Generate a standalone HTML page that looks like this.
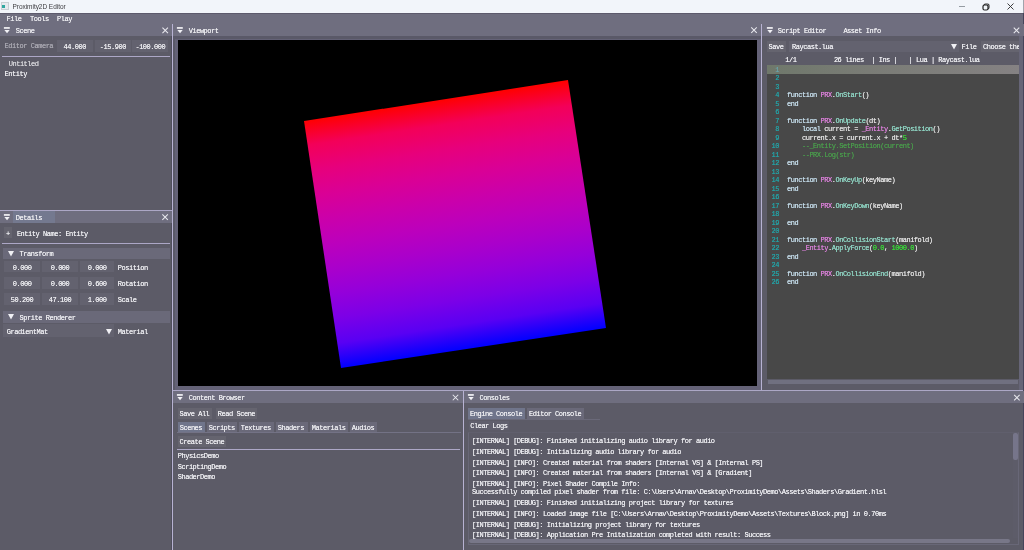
<!DOCTYPE html>
<html><head><meta charset="utf-8">
<style>
html,body{margin:0;padding:0;width:1024px;height:550px;overflow:hidden;background:#5c5b67;}
*{box-sizing:border-box;}
div{position:absolute;}
.t{transform:scaleY(1.1);transform-origin:0 3.5px;text-shadow:0 0 0.3px currentColor;white-space:pre;font:7px 'Liberation Mono',monospace;letter-spacing:-0.47px;line-height:8px;height:8px;color:#ececf0;}
.dim{color:#a8a7b0;}
</style></head><body><div id="root" style="left:0;top:0;width:1024px;height:550px;will-change:transform;">
<div style="left:0px;top:0px;width:1024.00px;height:13.00px;background:#f2f5fa;"></div>
<div style="left:1px;top:2px;width:8.00px;height:8.00px;background:#e6eaee;border:1px solid #c8d0d4;"></div>
<div style="left:2px;top:4.5px;width:3.00px;height:3.50px;background:#2fa7a0;"></div>
<div class="t" style="left:12.5px;top:2.6px;font:6.5px 'Liberation Sans',sans-serif;letter-spacing:-0.04px;color:#3c3c40;text-shadow:none;">Proximity2D Editor</div>
<div style="left:958.8px;top:5.5px;width:5.90px;height:1.30px;background:#959ba2;"></div>
<svg style="position:absolute;left:982px;top:2.5px" width="8" height="8"><rect x="2" y="1" width="5" height="5" rx="1.5" fill="none" stroke="#333" stroke-width="1.1"/><rect x="1" y="2" width="5" height="5" rx="1.5" fill="#f0f4f8" stroke="#222" stroke-width="1.2"/></svg>
<svg style="position:absolute;left:1006.5px;top:3px" width="7" height="7"><path d="M0.5 0.5L6.5 6.5M6.5 0.5L0.5 6.5" stroke="#2a2a2a" stroke-width="0.9"/></svg>
<div style="left:0px;top:13px;width:1024.00px;height:11.00px;background:#6f6e7f;"></div>
<div style="left:0px;top:13px;width:1024.00px;height:1.00px;background:#5d5a6c;"></div>
<div class="t" style="left:6.6px;top:15.25px;">File</div>
<div class="t" style="left:30px;top:15.25px;">Tools</div>
<div class="t" style="left:57px;top:15.25px;">Play</div>
<div style="left:171px;top:36px;width:1.00px;height:514.00px;background:#4f4e5c;"></div>
<div style="left:172px;top:24px;width:1.00px;height:526.00px;background:#b7b2d2;"></div>
<div style="left:761px;top:24px;width:1.00px;height:367.00px;background:#b7b2d2;"></div>
<div style="left:463px;top:391px;width:1.00px;height:159.00px;background:#b7b2d2;"></div>
<div style="left:0px;top:210px;width:172.00px;height:1.00px;background:#aca7c6;"></div>
<div style="left:173px;top:390px;width:851.00px;height:1.00px;background:#aca7c6;"></div>
<div style="left:1023px;top:13px;width:1.00px;height:537.00px;background:#45445a;"></div>
<div style="left:1023px;top:0px;width:1.00px;height:13.00px;background:#a0a4ac;"></div>
<div style="left:0px;top:24px;width:172.00px;height:12.00px;background:#6f6e7f;"></div>
<svg style="position:absolute;left:3px;top:26px" width="9" height="9"><rect x="0.9" y="1.1" width="5.9" height="1.7" fill="#f2f2f6"/><path d="M1.4 3.9L6.7 3.9L4.05 7.2Z" fill="#f2f2f6"/></svg>
<div class="t" style="left:15.8px;top:27.40px;">Scene</div>
<svg style="position:absolute;left:161px;top:26px" width="8" height="8"><path d="M1.45 1.65L6.95 7.15M6.95 1.65L1.45 7.15" stroke="#e8e8ee" stroke-width="1.05"/></svg>
<div class="t dim" style="left:4.6px;top:41.50px;">Editor Camera</div>
<div style="left:56.5px;top:40px;width:36.40px;height:12.20px;background:#63626f;"></div>
<div class="t" style="left:56.5px;top:42.80px;width:36.40px;text-align:center;">44.000</div>
<div style="left:94.7px;top:40px;width:36.30px;height:12.20px;background:#63626f;"></div>
<div class="t" style="left:94.7px;top:42.80px;width:36.30px;text-align:center;">-15.900</div>
<div style="left:132.3px;top:40px;width:36.10px;height:12.20px;background:#63626f;"></div>
<div class="t" style="left:132.3px;top:42.80px;width:36.10px;text-align:center;">-100.000</div>
<div style="left:2px;top:56px;width:168.00px;height:1.00px;background:#aca7c6;"></div>
<div class="t" style="left:8.7px;top:59.80px;color:#d6d6da;">Untitled</div>
<div class="t" style="left:4.6px;top:69.90px;">Entity</div>
<div style="left:0px;top:211px;width:172.00px;height:12.00px;background:#6f6e7f;"></div>
<div style="left:13px;top:211px;width:41.50px;height:12.00px;background:#74798f;"></div>
<svg style="position:absolute;left:3px;top:213px" width="9" height="9"><rect x="0.9" y="1.1" width="5.9" height="1.7" fill="#f2f2f6"/><path d="M1.4 3.9L6.7 3.9L4.05 7.2Z" fill="#f2f2f6"/></svg>
<div class="t" style="left:15.8px;top:213.70px;">Details</div>
<svg style="position:absolute;left:161px;top:213px" width="8" height="8"><path d="M1.35 1.35L6.85 6.85M6.85 1.35L1.35 6.85" stroke="#e8e8ee" stroke-width="1.05"/></svg>
<div style="left:4px;top:227px;width:8.00px;height:11.00px;background:#65646f;"></div>
<div class="t" style="left:6px;top:229.80px;">+</div>
<div class="t" style="left:16.9px;top:230.10px;">Entity Name: Entity</div>
<div style="left:2px;top:243px;width:168.00px;height:1.00px;background:#aca7c6;"></div>
<div style="left:2.7px;top:248px;width:167.30px;height:11.00px;background:#6a6979;"></div>
<svg style="position:absolute;left:7.5px;top:250.5px" width="7" height="6"><path d="M0 0L6 0L3 5.5Z" fill="#f0f0f4"/></svg>
<div class="t" style="left:19.6px;top:250.10px;">Transform</div>
<div style="left:3.8px;top:260.7px;width:36.50px;height:11.80px;background:#63626f;"></div>
<div class="t" style="left:3.8px;top:263.80px;width:36.50px;text-align:center;">0.000</div>
<div style="left:42px;top:260.7px;width:36.00px;height:11.80px;background:#63626f;"></div>
<div class="t" style="left:42px;top:263.80px;width:36.00px;text-align:center;">0.000</div>
<div style="left:79.6px;top:260.7px;width:34.90px;height:11.80px;background:#63626f;"></div>
<div class="t" style="left:79.6px;top:263.80px;width:34.90px;text-align:center;">0.000</div>
<div class="t" style="left:117.8px;top:263.80px;">Position</div>
<div style="left:3.8px;top:277px;width:36.50px;height:11.80px;background:#63626f;"></div>
<div class="t" style="left:3.8px;top:280.10px;width:36.50px;text-align:center;">0.000</div>
<div style="left:42px;top:277px;width:36.00px;height:11.80px;background:#63626f;"></div>
<div class="t" style="left:42px;top:280.10px;width:36.00px;text-align:center;">0.000</div>
<div style="left:79.6px;top:277px;width:34.90px;height:11.80px;background:#63626f;"></div>
<div class="t" style="left:79.6px;top:280.10px;width:34.90px;text-align:center;">0.600</div>
<div class="t" style="left:117.8px;top:280.10px;">Rotation</div>
<div style="left:3.8px;top:293px;width:36.50px;height:11.80px;background:#63626f;"></div>
<div class="t" style="left:3.8px;top:296.10px;width:36.50px;text-align:center;">50.200</div>
<div style="left:42px;top:293px;width:36.00px;height:11.80px;background:#63626f;"></div>
<div class="t" style="left:42px;top:296.10px;width:36.00px;text-align:center;">47.100</div>
<div style="left:79.6px;top:293px;width:34.90px;height:11.80px;background:#63626f;"></div>
<div class="t" style="left:79.6px;top:296.10px;width:34.90px;text-align:center;">1.000</div>
<div class="t" style="left:117.8px;top:296.10px;">Scale</div>
<div style="left:2.7px;top:311px;width:167.30px;height:11.50px;background:#6a6979;"></div>
<svg style="position:absolute;left:7.5px;top:314px" width="7" height="6"><path d="M0 0L6 0L3 5.5Z" fill="#f0f0f4"/></svg>
<div class="t" style="left:19.6px;top:313.70px;">Sprite Renderer</div>
<div style="left:3.4px;top:324.3px;width:110.60px;height:12.70px;background:#63626f;"></div>
<div class="t" style="left:6.7px;top:327.80px;">GradientMat</div>
<svg style="position:absolute;left:106px;top:328.5px" width="7" height="6"><path d="M0 0L6 0L3 5.5Z" fill="#f0f0f4"/></svg>
<div class="t" style="left:117.8px;top:327.50px;">Material</div>
<div style="left:173px;top:24px;width:588.00px;height:12.00px;background:#6f6e7f;"></div>
<svg style="position:absolute;left:176px;top:26px" width="9" height="9"><rect x="0.9" y="1.1" width="5.9" height="1.7" fill="#f2f2f6"/><path d="M1.4 3.9L6.7 3.9L4.05 7.2Z" fill="#f2f2f6"/></svg>
<div class="t" style="left:188.7px;top:27.40px;">Viewport</div>
<svg style="position:absolute;left:750px;top:26px" width="8" height="8"><path d="M1.25 1.35L6.75 6.85M6.75 1.35L1.25 6.85" stroke="#e8e8ee" stroke-width="1.05"/></svg>
<div style="left:173px;top:36px;width:588.00px;height:354.00px;background:#646277;"></div>
<div style="left:173px;top:36px;width:588.00px;height:3.00px;background:#5a5968;"></div>
<div style="left:173px;top:36px;width:2.00px;height:354.00px;background:#5a5968;"></div>
<div style="left:177.6px;top:40.2px;width:579.30px;height:345.70px;background:#000;"></div>
<svg style="position:absolute;left:0;top:0" width="1024" height="550">
<defs><linearGradient id="g" gradientUnits="userSpaceOnUse" x1="436" y1="100.5" x2="473.5" y2="348">
<stop offset="0.0" stop-color="rgb(255,0,0)"/><stop offset="0.1" stop-color="rgb(243,0,89)"/><stop offset="0.2" stop-color="rgb(231,0,124)"/><stop offset="0.3" stop-color="rgb(218,0,149)"/><stop offset="0.4" stop-color="rgb(203,0,170)"/><stop offset="0.5" stop-color="rgb(188,0,188)"/><stop offset="0.6" stop-color="rgb(170,0,203)"/><stop offset="0.7" stop-color="rgb(149,0,218)"/><stop offset="0.8" stop-color="rgb(124,0,231)"/><stop offset="0.9" stop-color="rgb(89,0,243)"/><stop offset="1.0" stop-color="rgb(0,0,255)"/></linearGradient></defs>
<polygon points="304,121 568,80 606,328 341,368" fill="url(#g)"/>
</svg>
<div style="left:762px;top:24px;width:262.00px;height:12.00px;background:#6f6e7f;"></div>
<svg style="position:absolute;left:766px;top:26px" width="9" height="9"><rect x="0.9" y="1.1" width="5.9" height="1.7" fill="#f2f2f6"/><path d="M1.4 3.9L6.7 3.9L4.05 7.2Z" fill="#f2f2f6"/></svg>
<div class="t" style="left:777.8px;top:27.40px;">Script Editor</div>
<div class="t" style="left:843.4px;top:27.40px;">Asset Info</div>
<svg style="position:absolute;left:1012px;top:26px" width="8" height="8"><path d="M1.75 1.70L7.25 7.20M7.25 1.70L1.75 7.20" stroke="#e8e8ee" stroke-width="1.05"/></svg>
<div style="left:767px;top:40.5px;width:19.00px;height:11.50px;background:#65646f;"></div>
<div class="t" style="left:768.6px;top:42.80px;">Save</div>
<div style="left:789.4px;top:40.5px;width:169.40px;height:11.50px;background:#63626f;"></div>
<div class="t" style="left:792px;top:42.80px;">Raycast.lua</div>
<svg style="position:absolute;left:951px;top:43.5px" width="7" height="6"><path d="M0 0L6 0L3 5.5Z" fill="#f0f0f4"/></svg>
<div class="t" style="left:961.6px;top:42.80px;">File</div>
<div style="left:981px;top:40.5px;width:40.00px;height:11.50px;background:#65646f;"></div>
<div class="t" style="left:983px;top:42.80px;width:38px;overflow:hidden;">Choose the</div>
<div class="t" style="left:785.3px;top:55.50px;">1/1</div>
<div class="t" style="left:833.9px;top:55.50px;">26 lines  | Ins |   | Lua | Raycast.lua</div>
<div style="left:1019px;top:36px;width:4.00px;height:354.00px;background:#666577;"></div>
<div style="left:766.5px;top:64.6px;width:252.00px;height:314.70px;background:#484848;"></div>
<div style="left:766.5px;top:64.8px;width:252.00px;height:8.90px;background:#737570;background:linear-gradient(90deg,#6f786b,#7a7c76 40%,#858283);"></div>
<div style="left:767.7px;top:380px;width:250.00px;height:4.40px;background:#707080;"></div>
<div class="t" style="left:758.7px;top:66.00px;width:20.30px;text-align:right;color:#6aa0a8;">1</div>
<div class="t" style="left:758.7px;top:74.49px;width:20.30px;text-align:right;color:#24a0a4;">2</div>
<div class="t" style="left:758.7px;top:82.98px;width:20.30px;text-align:right;color:#24a0a4;">3</div>
<div class="t" style="left:758.7px;top:91.47px;width:20.30px;text-align:right;color:#24a0a4;">4</div>
<div class="t" style="left:787px;top:91.47px;text-shadow:0 0 0.15px currentColor;"><span style="color:#c4dcea">function </span><span style="color:#d77fd6">PRX</span><span style="color:#e0e0e0">.</span><span style="color:#8fd6c4">OnStart</span><span style="color:#e0e0e0">()</span></div>
<div class="t" style="left:758.7px;top:99.96px;width:20.30px;text-align:right;color:#24a0a4;">5</div>
<div class="t" style="left:787px;top:99.96px;text-shadow:0 0 0.15px currentColor;"><span style="color:#c4dcea">end</span></div>
<div class="t" style="left:758.7px;top:108.45px;width:20.30px;text-align:right;color:#24a0a4;">6</div>
<div class="t" style="left:758.7px;top:116.94px;width:20.30px;text-align:right;color:#24a0a4;">7</div>
<div class="t" style="left:787px;top:116.94px;text-shadow:0 0 0.15px currentColor;"><span style="color:#c4dcea">function </span><span style="color:#d77fd6">PRX</span><span style="color:#e0e0e0">.</span><span style="color:#8fd6c4">OnUpdate</span><span style="color:#e0e0e0">(dt)</span></div>
<div class="t" style="left:758.7px;top:125.43px;width:20.30px;text-align:right;color:#24a0a4;">8</div>
<div class="t" style="left:787px;top:125.43px;text-shadow:0 0 0.15px currentColor;"><span style="color:#c4dcea">    local </span><span style="color:#e0e0e0">current = </span><span style="color:#d77fd6">_Entity</span><span style="color:#e0e0e0">.</span><span style="color:#8fd6c4">GetPosition</span><span style="color:#e0e0e0">()</span></div>
<div class="t" style="left:758.7px;top:133.92px;width:20.30px;text-align:right;color:#24a0a4;">9</div>
<div class="t" style="left:787px;top:133.92px;text-shadow:0 0 0.15px currentColor;"><span style="color:#e0e0e0">    current.x = current.x + dt*</span><span style="color:#38d838">5</span></div>
<div class="t" style="left:758.7px;top:142.41px;width:20.30px;text-align:right;color:#24a0a4;">10</div>
<div class="t" style="left:787px;top:142.41px;text-shadow:0 0 0.15px currentColor;"><span style="color:#4a9a4c">    --_Entity.SetPosition(current)</span></div>
<div class="t" style="left:758.7px;top:150.90px;width:20.30px;text-align:right;color:#24a0a4;">11</div>
<div class="t" style="left:787px;top:150.90px;text-shadow:0 0 0.15px currentColor;"><span style="color:#4a9a4c">    --PRX.Log(str)</span></div>
<div class="t" style="left:758.7px;top:159.39px;width:20.30px;text-align:right;color:#24a0a4;">12</div>
<div class="t" style="left:787px;top:159.39px;text-shadow:0 0 0.15px currentColor;"><span style="color:#c4dcea">end</span></div>
<div class="t" style="left:758.7px;top:167.88px;width:20.30px;text-align:right;color:#24a0a4;">13</div>
<div class="t" style="left:758.7px;top:176.37px;width:20.30px;text-align:right;color:#24a0a4;">14</div>
<div class="t" style="left:787px;top:176.37px;text-shadow:0 0 0.15px currentColor;"><span style="color:#c4dcea">function </span><span style="color:#d77fd6">PRX</span><span style="color:#e0e0e0">.</span><span style="color:#8fd6c4">OnKeyUp</span><span style="color:#e0e0e0">(keyName)</span></div>
<div class="t" style="left:758.7px;top:184.86px;width:20.30px;text-align:right;color:#24a0a4;">15</div>
<div class="t" style="left:787px;top:184.86px;text-shadow:0 0 0.15px currentColor;"><span style="color:#c4dcea">end</span></div>
<div class="t" style="left:758.7px;top:193.35px;width:20.30px;text-align:right;color:#24a0a4;">16</div>
<div class="t" style="left:758.7px;top:201.84px;width:20.30px;text-align:right;color:#24a0a4;">17</div>
<div class="t" style="left:787px;top:201.84px;text-shadow:0 0 0.15px currentColor;"><span style="color:#c4dcea">function </span><span style="color:#d77fd6">PRX</span><span style="color:#e0e0e0">.</span><span style="color:#8fd6c4">OnKeyDown</span><span style="color:#e0e0e0">(keyName)</span></div>
<div class="t" style="left:758.7px;top:210.33px;width:20.30px;text-align:right;color:#24a0a4;">18</div>
<div class="t" style="left:758.7px;top:218.82px;width:20.30px;text-align:right;color:#24a0a4;">19</div>
<div class="t" style="left:787px;top:218.82px;text-shadow:0 0 0.15px currentColor;"><span style="color:#c4dcea">end</span></div>
<div class="t" style="left:758.7px;top:227.31px;width:20.30px;text-align:right;color:#24a0a4;">20</div>
<div class="t" style="left:758.7px;top:235.80px;width:20.30px;text-align:right;color:#24a0a4;">21</div>
<div class="t" style="left:787px;top:235.80px;text-shadow:0 0 0.15px currentColor;"><span style="color:#c4dcea">function </span><span style="color:#d77fd6">PRX</span><span style="color:#e0e0e0">.</span><span style="color:#8fd6c4">OnCollisionStart</span><span style="color:#e0e0e0">(manifold)</span></div>
<div class="t" style="left:758.7px;top:244.29px;width:20.30px;text-align:right;color:#24a0a4;">22</div>
<div class="t" style="left:787px;top:244.29px;text-shadow:0 0 0.15px currentColor;"><span style="color:#d77fd6">    _Entity</span><span style="color:#e0e0e0">.</span><span style="color:#8fd6c4">ApplyForce</span><span style="color:#e0e0e0">(</span><span style="color:#38d838">0.0</span><span style="color:#e0e0e0">, </span><span style="color:#38d838">1000.0</span><span style="color:#e0e0e0">)</span></div>
<div class="t" style="left:758.7px;top:252.78px;width:20.30px;text-align:right;color:#24a0a4;">23</div>
<div class="t" style="left:787px;top:252.78px;text-shadow:0 0 0.15px currentColor;"><span style="color:#c4dcea">end</span></div>
<div class="t" style="left:758.7px;top:261.27px;width:20.30px;text-align:right;color:#24a0a4;">24</div>
<div class="t" style="left:758.7px;top:269.76px;width:20.30px;text-align:right;color:#24a0a4;">25</div>
<div class="t" style="left:787px;top:269.76px;text-shadow:0 0 0.15px currentColor;"><span style="color:#c4dcea">function </span><span style="color:#d77fd6">PRX</span><span style="color:#e0e0e0">.</span><span style="color:#8fd6c4">OnCollisionEnd</span><span style="color:#e0e0e0">(manifold)</span></div>
<div class="t" style="left:758.7px;top:278.25px;width:20.30px;text-align:right;color:#24a0a4;">26</div>
<div class="t" style="left:787px;top:278.25px;text-shadow:0 0 0.15px currentColor;"><span style="color:#c4dcea">end</span></div>
<div style="left:173px;top:391px;width:290.00px;height:12.00px;background:#6f6e7f;"></div>
<svg style="position:absolute;left:176px;top:393px" width="9" height="9"><rect x="0.9" y="1.1" width="5.9" height="1.7" fill="#f2f2f6"/><path d="M1.4 3.9L6.7 3.9L4.05 7.2Z" fill="#f2f2f6"/></svg>
<div class="t" style="left:188.8px;top:393.70px;">Content Browser</div>
<svg style="position:absolute;left:451px;top:393px" width="8" height="8"><path d="M1.75 1.75L7.25 7.25M7.25 1.75L1.75 7.25" stroke="#e8e8ee" stroke-width="1.05"/></svg>
<div style="left:177.6px;top:408px;width:34.40px;height:10.80px;background:#65646f;"></div>
<div class="t" style="left:179.5px;top:409.90px;">Save All</div>
<div style="left:215.8px;top:408px;width:41.20px;height:10.80px;background:#65646f;"></div>
<div class="t" style="left:217.8px;top:409.90px;">Read Scene</div>
<div style="left:177.9px;top:422px;width:26.70px;height:10.50px;background:#70758b;"></div>
<div class="t" style="left:179.70000000000002px;top:423.80px;">Scenes</div>
<div style="left:206.9px;top:422px;width:30.50px;height:10.50px;background:#6a6979;"></div>
<div class="t" style="left:208.70000000000002px;top:423.80px;">Scripts</div>
<div style="left:239px;top:422px;width:34.60px;height:10.50px;background:#6a6979;"></div>
<div class="t" style="left:240.8px;top:423.80px;">Textures</div>
<div style="left:276px;top:422px;width:31.50px;height:10.50px;background:#6a6979;"></div>
<div class="t" style="left:277.8px;top:423.80px;">Shaders</div>
<div style="left:310px;top:422px;width:37.80px;height:10.50px;background:#6a6979;"></div>
<div class="t" style="left:311.8px;top:423.80px;">Materials</div>
<div style="left:350px;top:422px;width:26.70px;height:10.50px;background:#6a6979;"></div>
<div class="t" style="left:351.8px;top:423.80px;">Audios</div>
<div style="left:177px;top:432px;width:283.50px;height:1.00px;background:#737285;"></div>
<div style="left:177.6px;top:436px;width:48.40px;height:10.80px;background:#65646f;"></div>
<div class="t" style="left:179.5px;top:437.90px;">Create Scene</div>
<div style="left:177px;top:448.5px;width:283.00px;height:1.00px;background:#aca7c6;"></div>
<div class="t" style="left:177.7px;top:451.90px;">PhysicsDemo</div>
<div class="t" style="left:177.7px;top:462.70px;">ScriptingDemo</div>
<div class="t" style="left:177.7px;top:473.20px;">ShaderDemo</div>
<div style="left:464px;top:391px;width:560.00px;height:12.00px;background:#6f6e7f;"></div>
<svg style="position:absolute;left:467px;top:393px" width="9" height="9"><rect x="0.9" y="1.1" width="5.9" height="1.7" fill="#f2f2f6"/><path d="M1.4 3.9L6.7 3.9L4.05 7.2Z" fill="#f2f2f6"/></svg>
<div class="t" style="left:479.6px;top:393.70px;">Consoles</div>
<svg style="position:absolute;left:1012px;top:393px" width="8" height="8"><path d="M2.15 1.85L7.65 7.35M7.65 1.85L2.15 7.35" stroke="#e8e8ee" stroke-width="1.05"/></svg>
<div style="left:468px;top:408.3px;width:56.80px;height:10.40px;background:#70758b;"></div>
<div class="t" style="left:470px;top:410.00px;">Engine Console</div>
<div style="left:526.8px;top:408.3px;width:56.80px;height:10.40px;background:#6a6979;"></div>
<div class="t" style="left:529px;top:410.00px;">Editor Console</div>
<div style="left:468px;top:418.5px;width:132.00px;height:1.00px;background:#6a6979;"></div>
<div style="left:468.7px;top:421.3px;width:40.30px;height:9.00px;background:#605f6d;"></div>
<div class="t" style="left:470.2px;top:422.30px;">Clear Logs</div>
<div style="left:468px;top:432.2px;width:551px;height:112.5px;border:1px solid #686777;border-top-color:#605f6d;"></div>
<div style="left:1013px;top:433px;width:5.00px;height:105.00px;background:#5d5c69;"></div>
<div style="left:1013.3px;top:433px;width:4.50px;height:26.50px;background:#76758a;border-radius:2px;"></div>
<div style="left:469px;top:538.6px;width:541.40px;height:4.60px;background:#787788;border-radius:2px;"></div>
<div class="t" style="left:472.1px;top:437.00px;">[INTERNAL] [DEBUG]: Finished initializing audio library for audio</div>
<div class="t" style="left:472.1px;top:447.90px;">[INTERNAL] [DEBUG]: Initializing audio library for audio</div>
<div class="t" style="left:472.1px;top:458.50px;">[INTERNAL] [INFO]: Created material from shaders [Internal VS] &amp; [Internal PS]</div>
<div class="t" style="left:472.1px;top:469.30px;">[INTERNAL] [INFO]: Created material from shaders [Internal VS] &amp; [Gradient]</div>
<div class="t" style="left:472.1px;top:479.90px;">[INTERNAL] [INFO]: Pixel Shader Compile Info:</div>
<div class="t" style="left:472.1px;top:488.30px;">Successfully compiled pixel shader from file: C:\Users\Arnav\Desktop\ProximityDemo\Assets\Shaders\Gradient.hlsl</div>
<div class="t" style="left:472.1px;top:499.10px;">[INTERNAL] [DEBUG]: Finished initializing project library for textures</div>
<div class="t" style="left:472.1px;top:510.00px;">[INTERNAL] [INFO]: Loaded image file [C:\Users\Arnav\Desktop\ProximityDemo\Assets\Textures\Block.png] in 0.70ms</div>
<div class="t" style="left:472.1px;top:520.50px;">[INTERNAL] [DEBUG]: Initializing project library for textures</div>
<div class="t" style="left:472.1px;top:531.10px;">[INTERNAL] [DEBUG]: Application Pre Initalization completed with result: Success</div>
</div></body></html>
